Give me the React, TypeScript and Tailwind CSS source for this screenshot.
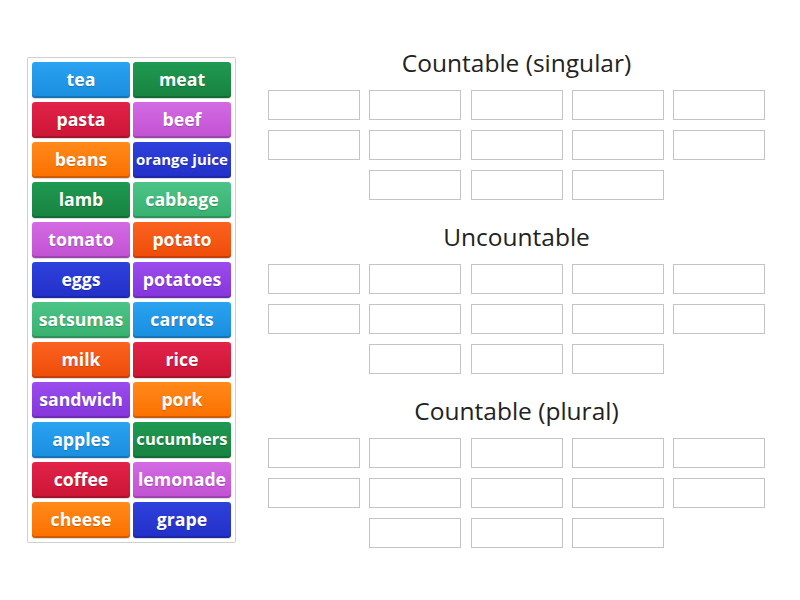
import React from "react";

type Tile = { t: string; c: string; size?: string };

const C = {
  blue: "bg-[linear-gradient(#2aa3f0,#1a8ddf)]",
  dgreen: "bg-[linear-gradient(#1f9a52,#18823f)]",
  red: "bg-[linear-gradient(#e2234a,#cc1535)]",
  pink: "bg-[linear-gradient(#d46ae3,#c152d3)]",
  orange: "bg-[linear-gradient(#ff8a1a,#fb7000)]",
  dblue: "bg-[linear-gradient(#2f42dc,#2230c8)]",
  teal: "bg-[linear-gradient(#4cc488,#37b06f)]",
  ored: "bg-[linear-gradient(#fb6220,#ee4c08)]",
  purple: "bg-[linear-gradient(#9a4cec,#8536dc)]",
};

const tiles: Tile[] = [
  { t: "tea", c: C.blue },
  { t: "meat", c: C.dgreen },
  { t: "pasta", c: C.red },
  { t: "beef", c: C.pink },
  { t: "beans", c: C.orange },
  { t: "orange juice", c: C.dblue, size: "text-[15px]" },
  { t: "lamb", c: C.dgreen },
  { t: "cabbage", c: C.teal },
  { t: "tomato", c: C.pink },
  { t: "potato", c: C.ored },
  { t: "eggs", c: C.dblue },
  { t: "potatoes", c: C.purple },
  { t: "satsumas", c: C.teal },
  { t: "carrots", c: C.blue },
  { t: "milk", c: C.ored },
  { t: "rice", c: C.red },
  { t: "sandwich", c: C.purple },
  { t: "pork", c: C.orange },
  { t: "apples", c: C.blue },
  { t: "cucumbers", c: C.dgreen, size: "text-[16.6px]" },
  { t: "coffee", c: C.red },
  { t: "lemonade", c: C.pink },
  { t: "cheese", c: C.orange },
  { t: "grape", c: C.dblue },
];

function Section({ title }: { title: string }) {
  return (
    <div className="flex flex-col items-center">
      <div className="h-[26px] flex items-center justify-center text-[24.5px] text-[#222] leading-none whitespace-nowrap">
        {title}
      </div>
      <div className="mt-[14px] w-[497px] flex flex-wrap justify-center gap-x-[9.25px] gap-y-[10px]">
        {Array.from({ length: 13 }).map((_, i) => (
          <div key={i} className="w-[92px] h-[30px] border border-[#c4c4c4] bg-white" />
        ))}
      </div>
    </div>
  );
}

export default function App() {
  return (
    <div
      className="w-[800px] h-[600px] bg-white flex"
      style={{ fontFamily: '"Open Sans", "Noto Sans", sans-serif' }}
    >
      <div className="pl-[27px] pt-[57px]">
        <div className="w-[209px] border border-[#cfcfcf] rounded-[2px] p-[4px] grid grid-cols-2 gap-x-[3px] gap-y-[4px]">
          {tiles.map((x) => (
            <div
              key={x.t}
              className={`${x.c} h-[36px] pb-[2px] rounded-[3px] flex items-center justify-center text-white font-bold ${x.size ?? "text-[17.7px]"} shadow-[inset_0_-2px_0_rgba(0,0,0,0.18),0_1px_1px_rgba(0,0,0,0.15)] [text-shadow:0_1px_1px_rgba(0,0,0,0.2)] whitespace-nowrap`}
            >
              {x.t}
            </div>
          ))}
        </div>
      </div>
      <div className="ml-[32px] pt-[50px] flex flex-col gap-[24px]">
        <Section title="Countable (singular)" />
        <Section title="Uncountable" />
        <Section title="Countable (plural)" />
      </div>
    </div>
  );
}
